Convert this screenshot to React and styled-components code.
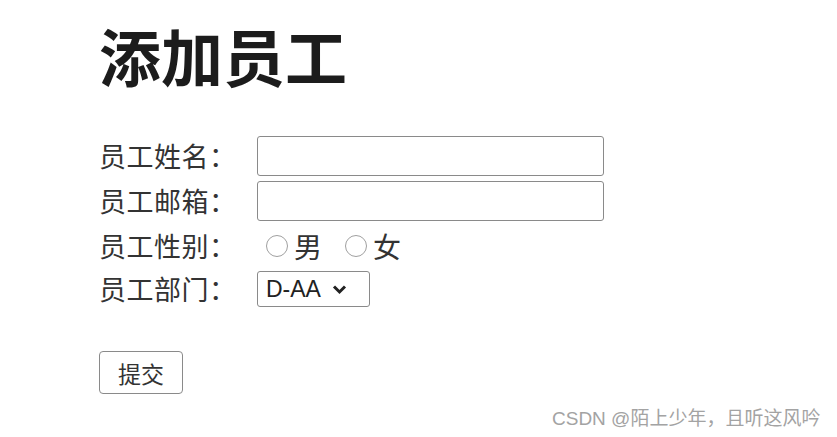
import React from "react";
import styled, { createGlobalStyle } from "styled-components";

const Global = createGlobalStyle`
  html, body {
    margin: 0;
    padding: 0;
    background: #fff;
  }
  body {
    width: 837px;
    height: 437px;
    overflow: hidden;
    font-family: "Noto Sans CJK SC", "Noto Sans", sans-serif;
  }
`;

const Page = styled.div`
  position: relative;
  width: 837px;
  height: 437px;
  padding: 20px 0 0 99px;
  box-sizing: border-box;
  color: #2a2a2a;
`;

const Title = styled.h1`
  margin: 0 0 46px;
  font-size: 62px;
  line-height: 70px;
  font-weight: 700;
  color: #1c1c1c;
`;

const Form = styled.form`
  display: flex;
  flex-direction: column;
  gap: 5px;
`;

const Row = styled.div`
  display: flex;
  align-items: center;
  min-height: ${(p) => p.$h || 40}px;
`;

const Label = styled.span`
  width: 158px;
  flex: none;
  font-size: 27px;
  line-height: 30px;
  color: #333;
  letter-spacing: 0.5px;
`;

const TextInput = styled.input`
  width: 347px;
  height: 40px;
  box-sizing: border-box;
  border: 1.5px solid #8a8a8a;
  border-radius: 3px;
  background: #fff;
  outline: none;
`;

const Radio = styled.span`
  width: 22px;
  height: 22px;
  box-sizing: border-box;
  border: 1.5px solid #a0a0a0;
  border-radius: 50%;
  margin: 0 6px 0 ${(p) => p.$ml}px;
  flex: none;
`;

const Option = styled.span`
  font-size: 28px;
  line-height: 30px;
  color: #333;
`;

const Select = styled.div`
  width: 113px;
  height: 36px;
  box-sizing: border-box;
  border: 1.5px solid #8a8a8a;
  border-radius: 3px;
  display: flex;
  align-items: center;
  gap: 11px;
  padding: 0 0 0 8px;
  font-family: "Liberation Sans", Arial, sans-serif;
  font-size: 23px;
  color: #222;
`;

const Button = styled.button`
  display: block;
  margin-top: 44px;
  width: 84px;
  height: 43px;
  border: 1.5px solid #8a8a8a;
  border-radius: 4px;
  background: #fff;
  font-family: "Noto Sans CJK SC", sans-serif;
  font-size: 23px;
  color: #333;
  padding: 0;
`;

const Mark = styled.div`
  position: absolute;
  left: 552px;
  top: 403px;
  font-family: "Liberation Sans", "Noto Sans CJK SC", sans-serif;
  font-size: 19px;
  color: #a3a3a3;
  white-space: nowrap;
`;

export default function App() {
  return (
    <Page>
      <Global />
      <Title>添加员工</Title>
      <Form onSubmit={(e) => e.preventDefault()}>
        <Row>
          <Label>员工姓名：</Label>
          <TextInput type="text" />
        </Row>
        <Row>
          <Label>员工邮箱：</Label>
          <TextInput type="text" />
        </Row>
        <Row>
          <Label>员工性别：</Label>
          <Radio $ml={9} />
          <Option>男</Option>
          <Radio $ml={23} />
          <Option>女</Option>
        </Row>
        <Row $h={36}>
          <Label>员工部门：</Label>
          <Select>
            <span>D-AA</span>
            <svg width="15" height="11" viewBox="0 0 15 11">
              <path d="M2 2.5 L7.5 8 L13 2.5" fill="none" stroke="#222" strokeWidth="3" />
            </svg>
          </Select>
        </Row>
      </Form>
      <Button type="button">提交</Button>
      <Mark>CSDN @陌上少年，且听这风吟</Mark>
    </Page>
  );
}
